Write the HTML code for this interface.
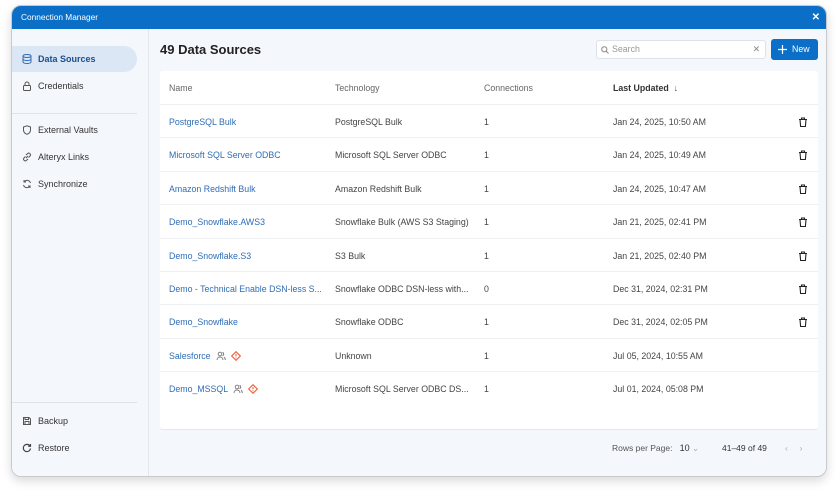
<!DOCTYPE html>
<html><head><meta charset="utf-8"><style>
*{box-sizing:border-box;margin:0;padding:0}
body{width:837px;height:493px;background:#fff;font-family:"Liberation Sans",sans-serif;position:relative;overflow:hidden}
.win{position:absolute;left:11px;top:5px;width:816px;height:472px;border:1px solid #c8cacc;border-radius:10px;overflow:hidden;background:#f4f7fc;box-shadow:0 4px 10px rgba(0,0,0,.15)}
.title{height:23px;background:#0b6fc7;color:#fff;font-size:8.3px;line-height:23px;padding-left:9px;position:relative}
.title b{position:absolute;right:6px;top:0;font-size:10px}
.side{position:absolute;left:0;top:23px;width:137px;bottom:0;border-right:1px solid #e3e7ee;background:#f4f7fc}
.it{position:absolute;left:0;height:26px;width:125px;font-size:9px;color:#333;line-height:26px;padding-left:26px}
.it svg{position:absolute;left:10px;top:8px}
.it.act{background:#dce7f5;border-radius:0 13px 13px 0;color:#1b4f8f;font-weight:bold}
.sep{position:absolute;left:0;width:125px;border-top:1px solid #e0e4ea}
h1{position:absolute;left:160px;top:42px;font-size:13px;color:#222}
.search{position:absolute;left:596px;top:40px;width:170px;height:19px;background:#fff;border:1px solid #dde2ea;border-radius:3px;font-size:8.8px;color:#999;line-height:17px;padding-left:15px}
.new{position:absolute;left:771px;top:39px;width:47px;height:21px;background:#0b6fc7;border-radius:3px;color:#fff;font-size:8.8px;line-height:21px;padding-left:21px}
.card{position:absolute;left:160px;top:71px;width:658px;height:359px;background:#fff;border-radius:3px;border-bottom:1px solid #e3e7ee}
.row{position:absolute;left:0;width:658px;height:33.4px;border-bottom:1px solid #eef0f3;font-size:8.8px;color:#444}
.row>span{position:absolute;top:0;line-height:34px;white-space:nowrap}
.c1{left:9px;color:#2f6db5}.c2{left:175px}.c3{left:324px}.c4{left:453px}
.hd>span{color:#666}.hd .c4{color:#333;font-weight:bold}
.row svg.tr{position:absolute;left:638px;top:12px}
.ic{display:inline-block;vertical-align:-2px;margin-left:5px}
.pg{position:absolute;top:443px;font-size:8.5px;color:#555}
</style></head><body>
<div class="win">
<div class="title">Connection Manager<b>✕</b></div>
<div class="side">
<div class="it act" style="top:17px"><svg width="10" height="10" viewBox="0 0 10 10" fill="none" stroke="#2f6db5" stroke-width="1"><ellipse cx="5" cy="2" rx="4" ry="1.5"/><path d="M1 2v6c0 .8 1.8 1.5 4 1.5s4-.7 4-1.5V2M1 5c0 .8 1.8 1.5 4 1.5S9 5.8 9 5"/></svg>Data Sources</div>
<div class="it" style="top:44px"><svg width="10" height="10" viewBox="0 0 10 10" fill="none" stroke="#555" stroke-width="1"><rect x="1.5" y="4.5" width="7" height="5" rx="1"/><path d="M3 4.5V3a2 2 0 014 0v1.5"/></svg>Credentials</div>
<div class="sep" style="top:84px"></div>
<div class="it" style="top:88px"><svg width="10" height="10" viewBox="0 0 10 10" fill="none" stroke="#555" stroke-width="1"><path d="M5 .8L1.5 2v3c0 2.2 1.6 3.6 3.5 4.3C6.9 8.6 8.5 7.2 8.5 5V2z"/></svg>External Vaults</div>
<div class="it" style="top:115px"><svg width="10" height="10" viewBox="0 0 10 10" fill="none" stroke="#555" stroke-width="1"><path d="M4 6l2-2M3.5 4.5L2 6a1.7 1.7 0 002.4 2.4L6 7M6.5 5.5L8 4A1.7 1.7 0 005.6 1.6L4 3"/></svg>Alteryx Links</div>
<div class="it" style="top:142px"><svg width="10" height="10" viewBox="0 0 10 10" fill="none" stroke="#555" stroke-width="1"><path d="M8.5 4A3.6 3.6 0 002 3M1.5 6A3.6 3.6 0 008 7M2 1v2h2M8 9V7H6"/></svg>Synchronize</div>
<div class="sep" style="top:373px"></div>
<div class="it" style="top:379px"><svg width="10" height="10" viewBox="0 0 10 10" fill="none" stroke="#555" stroke-width="1"><path d="M1.5 1.5h5.5l1.5 1.5v5.5h-7z"/><rect x="3" y="1.5" width="3.5" height="2"/><rect x="3" y="5.5" width="4" height="3"/></svg>Backup</div>
<div class="it" style="top:406px"><svg width="10" height="10" viewBox="0 0 10 10" fill="none" stroke="#444" stroke-width="1.2"><path d="M8.5 5.5A3.6 3.6 0 115 1.4c1.3 0 2.3.6 3 1.5M8.5 1v2.3H6.2"/></svg>Restore</div>
</div>
</div>
<h1>49 Data Sources</h1>
<div class="search"><svg style="position:absolute;left:4px;top:5px" width="8" height="8" viewBox="0 0 8 8" fill="none" stroke="#888" stroke-width="1"><circle cx="3.3" cy="3.3" r="2.6"/><path d="M5.2 5.2L7.5 7.5"/></svg>Search<span style="position:absolute;right:5px;color:#888">✕</span></div>
<div class="new"><svg style="position:absolute;left:7px;top:6px" width="9" height="9" viewBox="0 0 9 9" stroke="#fff" stroke-width="1.2"><path d="M4.5 0v9M0 4.5h9"/></svg>New</div>
<svg width="0" height="0" style="position:absolute"><defs><g id="t" fill="none" stroke="#222" stroke-width="1.1"><path d="M1 2.5h8M3.5 2.5V1h3v1.5M2 2.5l.6 7h4.8l.6-7"/></g><g id="p" fill="none" stroke="#777" stroke-width=".9"><circle cx="4" cy="3" r="1.8"/><path d="M1 9c0-1.8 1.3-3 3-3s3 1.2 3 3M6.5 1.3a1.8 1.8 0 010 3.4M8 6.3c.8.4 1.3 1.5 1.3 2.7"/></g><g id="w" fill="none" stroke="#f0603a" stroke-width="1.1"><path d="M5 .7L9.3 5 5 9.3.7 5z"/><path d="M5 3v2.4M5 6.5v.8"/></g></defs></svg>
<div class="card">
<div class="row hd" style="top:0;height:34px"><span class="c1" style="color:#666">Name</span><span class="c2">Technology</span><span class="c3">Connections</span><span class="c4">Last Updated <span style="font-weight:normal;color:#555">&nbsp;↓</span></span></div>
<div class="row" style="top:34px"><span class="c1">PostgreSQL Bulk</span><span class="c2">PostgreSQL Bulk</span><span class="c3">1</span><span class="c4">Jan 24, 2025, 10:50 AM</span><svg class="tr" width="10" height="11"><use href="#t"/></svg></div>
<div class="row" style="top:67.4px"><span class="c1">Microsoft SQL Server ODBC</span><span class="c2">Microsoft SQL Server ODBC</span><span class="c3">1</span><span class="c4">Jan 24, 2025, 10:49 AM</span><svg class="tr" width="10" height="11"><use href="#t"/></svg></div>
<div class="row" style="top:100.8px"><span class="c1">Amazon Redshift Bulk</span><span class="c2">Amazon Redshift Bulk</span><span class="c3">1</span><span class="c4">Jan 24, 2025, 10:47 AM</span><svg class="tr" width="10" height="11"><use href="#t"/></svg></div>
<div class="row" style="top:134.2px"><span class="c1">Demo_Snowflake.AWS3</span><span class="c2">Snowflake Bulk (AWS S3 Staging)</span><span class="c3">1</span><span class="c4">Jan 21, 2025, 02:41 PM</span><svg class="tr" width="10" height="11"><use href="#t"/></svg></div>
<div class="row" style="top:167.6px"><span class="c1">Demo_Snowflake.S3</span><span class="c2">S3 Bulk</span><span class="c3">1</span><span class="c4">Jan 21, 2025, 02:40 PM</span><svg class="tr" width="10" height="11"><use href="#t"/></svg></div>
<div class="row" style="top:201px"><span class="c1">Demo - Technical Enable DSN-less S...</span><span class="c2">Snowflake ODBC DSN-less with...</span><span class="c3">0</span><span class="c4">Dec 31, 2024, 02:31 PM</span><svg class="tr" width="10" height="11"><use href="#t"/></svg></div>
<div class="row" style="top:234.4px"><span class="c1">Demo_Snowflake</span><span class="c2">Snowflake ODBC</span><span class="c3">1</span><span class="c4">Dec 31, 2024, 02:05 PM</span><svg class="tr" width="10" height="11"><use href="#t"/></svg></div>
<div class="row" style="top:267.8px"><span class="c1">Salesforce<svg class="ic" width="10" height="10"><use href="#p"/></svg><svg class="ic" width="10" height="10"><use href="#w"/></svg></span><span class="c2">Unknown</span><span class="c3">1</span><span class="c4">Jul 05, 2024, 10:55 AM</span></div>
<div class="row" style="top:301.2px;border:0"><span class="c1">Demo_MSSQL<svg class="ic" width="10" height="10"><use href="#p"/></svg><svg class="ic" width="10" height="10"><use href="#w"/></svg></span><span class="c2">Microsoft SQL Server ODBC DS...</span><span class="c3">1</span><span class="c4">Jul 01, 2024, 05:08 PM</span></div>
</div>
<div class="pg" style="left:612px">Rows per Page: &nbsp; <span style="color:#333;font-size:9px">10</span> <span style="color:#aaa">⌄</span></div>
<div class="pg" style="left:722px;color:#333">41–49 of 49</div>
<div class="pg" style="left:785px;color:#aaa">‹ &nbsp;&nbsp;&nbsp; ›</div>
</body></html>
